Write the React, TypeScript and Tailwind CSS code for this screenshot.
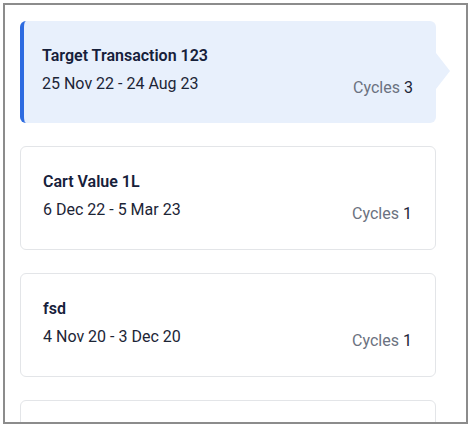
interface Campaign {
  id: string;
  name: string;
  range: string;
  cycles: number;
}

const campaigns: Campaign[] = [
  { id: "1", name: "Target Transaction 123", range: "25 Nov 22 - 24 Aug 23", cycles: 3 },
  { id: "2", name: "Cart Value 1L", range: "6 Dec 22 - 5 Mar 23", cycles: 1 },
  { id: "3", name: "fsd", range: "4 Nov 20 - 3 Dec 20", cycles: 1 },
];

function CampaignCard({ campaign, active }: { campaign: Campaign; active: boolean }) {
  return (
    <div className="relative">
      <div
        className={
          active
            ? "flex items-end justify-between rounded-md border-l-4 border-[#2d6be0] bg-[#e8f0fc] pl-[18px] pr-[23px] pt-[25px] pb-[25px]"
            : "flex items-end justify-between rounded-md border border-[#e3e5e8] bg-white pl-[22px] pr-[23px] pt-[25px] pb-[25px]"
        }
      >
        <div className="mb-1 flex flex-col gap-2">
          <p className="text-[16px] font-semibold leading-5 text-[#16203a]">
            {campaign.name}
          </p>
          <p className="text-[16px] leading-5 text-[#1c2536]">{campaign.range}</p>
        </div>
        <p className="text-[16px] leading-5">
          <span className="text-[#6b7280]">Cycles</span>
          <span className="ml-1 text-[#1c2536]">{campaign.cycles}</span>
        </p>
      </div>
      {active && (
        <div className="absolute right-[-14px] top-[32px] h-0 w-0 border-y-[18px] border-l-[14px] border-y-transparent border-l-[#e8f0fc]" />
      )}
    </div>
  );
}

export default function App() {
  return (
    <div className="h-[430px] w-[474px] bg-white p-[3px]" style={{ fontFamily: "Roboto, 'Liberation Sans', sans-serif" }}>
      <div className="h-[421px] w-[465px] overflow-hidden border-2 border-[#8c8c8c] bg-white">
        <div className="flex flex-col gap-[23px] pl-[15px] pr-[30px] pt-4">
          {campaigns.map((c, i) => (
            <CampaignCard key={c.id} campaign={c} active={i === 0} />
          ))}
          {/* next card, scrolled out of view */}
          <div className="h-[104px] shrink-0 rounded-md border border-[#e3e5e8] bg-white" />
        </div>
      </div>
    </div>
  );
}
